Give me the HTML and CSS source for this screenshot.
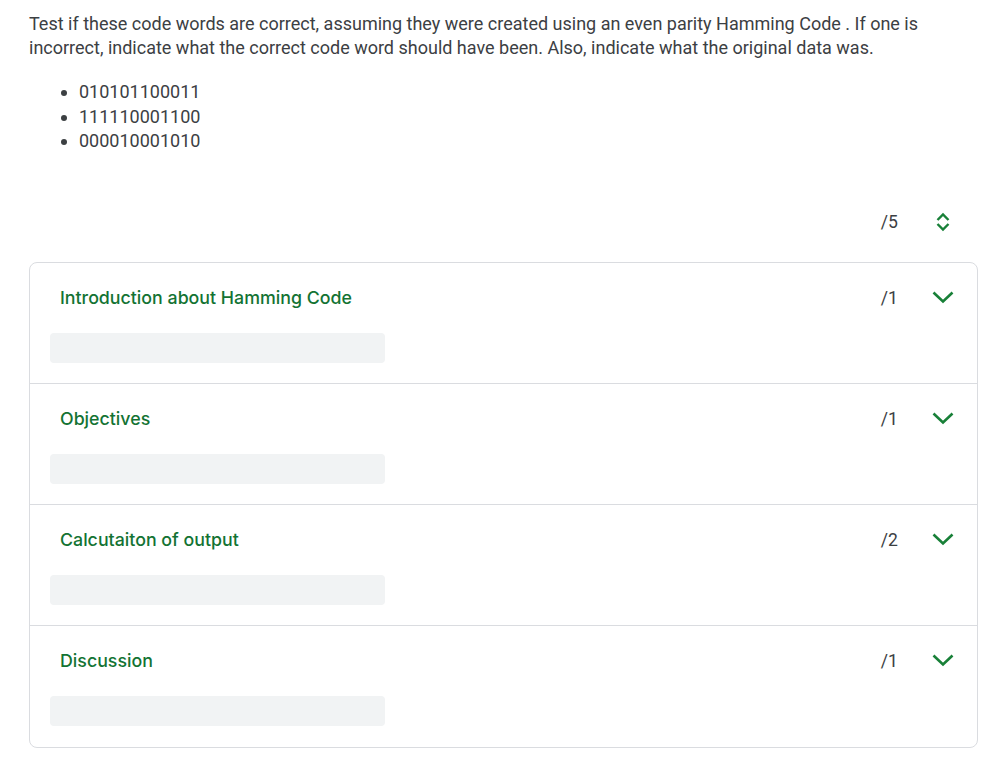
FILE: index.html
```html
<!DOCTYPE html>
<html>
<head>
<meta charset="utf-8">
<link rel="stylesheet" href="styles.css">
</head>
<body>
<div class="page">
  <p class="question">Test if these code words are correct, assuming they were created using an even parity Hamming Code . If one is incorrect, indicate what the correct code word should have been. Also, indicate what the original data was.</p>
  <ul class="words">
    <li>010101100011</li>
    <li>111110001100</li>
    <li>000010001010</li>
  </ul>
  <div class="total">
    <span class="score">/5</span>
    <span class="icon icon-both">
      <svg width="24" height="24" viewBox="0 0 24 24"><polyline points="6.5,10 12,4.5 17.5,10" fill="none" stroke="#188038" stroke-width="2.4"/><polyline points="6.5,14 12,19.5 17.5,14" fill="none" stroke="#188038" stroke-width="2.4"/></svg>
    </span>
  </div>
  <div class="card">
    <div class="row">
      <div class="head"><span class="title">Introduction about Hamming Code</span><span class="score">/1</span><span class="icon"><svg width="24" height="24" viewBox="0 0 24 24"><polyline points="2.5,6.5 12,15.5 21.5,6.5" fill="none" stroke="#188038" stroke-width="2.6"/></svg></span></div>
      <div class="bar"></div>
    </div>
    <div class="row">
      <div class="head"><span class="title">Objectives</span><span class="score">/1</span><span class="icon"><svg width="24" height="24" viewBox="0 0 24 24"><polyline points="2.5,6.5 12,15.5 21.5,6.5" fill="none" stroke="#188038" stroke-width="2.6"/></svg></span></div>
      <div class="bar"></div>
    </div>
    <div class="row">
      <div class="head"><span class="title">Calcutaiton of output</span><span class="score">/2</span><span class="icon"><svg width="24" height="24" viewBox="0 0 24 24"><polyline points="2.5,6.5 12,15.5 21.5,6.5" fill="none" stroke="#188038" stroke-width="2.6"/></svg></span></div>
      <div class="bar"></div>
    </div>
    <div class="row row-last">
      <div class="head"><span class="title">Discussion</span><span class="score">/1</span><span class="icon"><svg width="24" height="24" viewBox="0 0 24 24"><polyline points="2.5,6.5 12,15.5 21.5,6.5" fill="none" stroke="#188038" stroke-width="2.6"/></svg></span></div>
      <div class="bar"></div>
    </div>
  </div>
</div>
</body>
</html>
```
FILE: styles.css
```css
html, body {
  margin: 0;
  padding: 0;
  background: #ffffff;
}
.page {
  width: 949px;
  padding: 12px 0 0 29px;
  font-family: Roboto, "Liberation Sans", sans-serif;
  color: #202124;
  font-size: 18px;
}
.question {
  margin: 0;
  line-height: 24px;
  color: #3c4043;
}
.words {
  margin: 20px 0 0 0;
  padding-left: 50px;
  line-height: 24.5px;
  color: #3c4043;
}
.total {
  display: flex;
  align-items: center;
  justify-content: flex-end;
  height: 48px;
  margin-top: 44px;
  padding-right: 23px;
}
.score {
  color: #3c4043;
  font-size: 17.6px;
}
.icon {
  display: flex;
  width: 24px;
  height: 24px;
  margin-left: 33px;
}
.icon-both {
  margin-left: 33px;
}
.card {
  margin-top: 16px;
  border: 1px solid #dadce0;
  border-radius: 8px;
}
.row {
  padding: 20px;
  border-bottom: 1px solid #dadce0;
}
.row-last {
  border-bottom: none;
  padding-bottom: 21px;
}
.head {
  display: flex;
  align-items: center;
  height: 28px;
  padding: 2px 2px 0 10px;
  box-sizing: border-box;
}
.title {
  flex: 1;
  font-family: Inter, "Open Sans", sans-serif;
  font-weight: 500;
  font-size: 17.8px;
  color: #137333;
}
.bar {
  margin-top: 22px;
  width: 335px;
  height: 30px;
  background: #f1f3f4;
  border-radius: 4px;
}
```
